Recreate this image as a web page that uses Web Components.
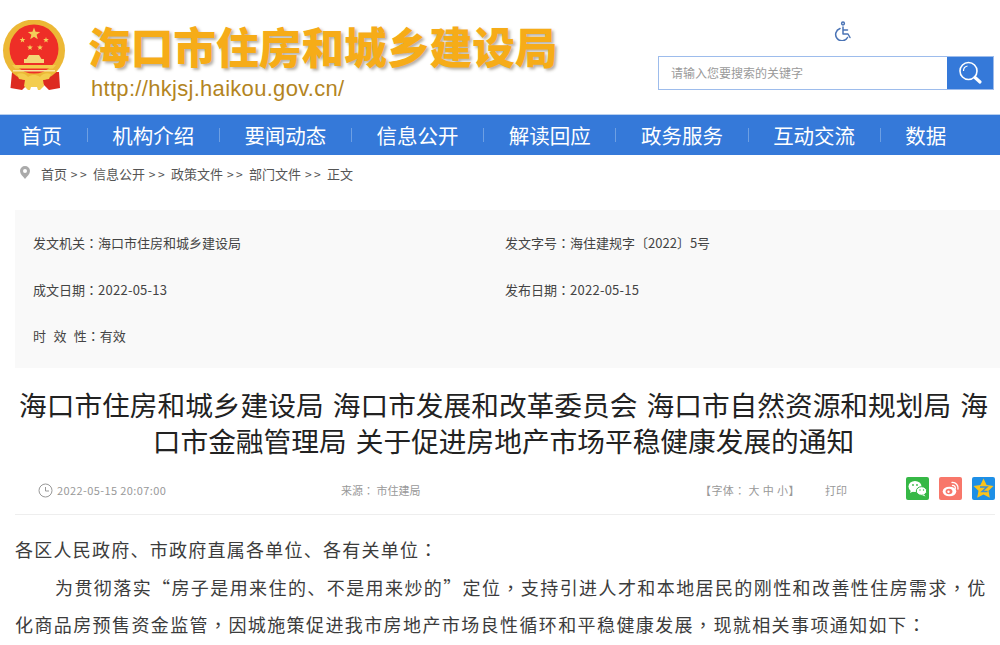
<!DOCTYPE html>
<html lang="zh-CN"><head><meta charset="utf-8"><title>海口市住房和城乡建设局</title>
<style>
html,body{margin:0;padding:0;background:#fff;overflow:hidden}
body{font-family:"Noto Sans CJK SC","Liberation Sans",sans-serif;width:1000px;height:645px}
</style></head><body>
<site-header></site-header>
<site-nav></site-nav>
<bread-crumb></bread-crumb>
<info-box></info-box>
<doc-title>海口市住房和城乡建设局 海口市发展和改革委员会 海口市自然资源和规划局 海口市金融管理局 关于促进房地产市场平稳健康发展的通知</doc-title>
<meta-bar></meta-bar>
<doc-body></doc-body>
<script>
function def(name, html){
  const out=html.replace(/[，：]/g,'<span class="pc" lang="zh-TW">$&</span>')+'<style>.pc{font-family:"Noto Sans CJK TC",sans-serif}</style>';
  customElements.define(name, class extends HTMLElement{
    constructor(){super();this.attachShadow({mode:'open'}).innerHTML=out;}
  });
}
const star=(cx,cy,r)=>{let p=[];for(let i=0;i<10;i++){const a=-Math.PI/2+i*Math.PI/5,R=i%2?r*.42:r;p.push((cx+R*Math.cos(a)).toFixed(1)+','+(cy+R*Math.sin(a)).toFixed(1));}return `<polygon points="${p.join(' ')}" fill="#f3cf5a"/>`;};
def('gov-emblem',`<style>:host{display:block;width:66px;height:72px}svg{display:block}</style>
<svg width="66" height="72" viewBox="0 0 66 72">
<path d="M10 52 L8.500 68 L20 70 L26 64 L41 64 L47 70 L58 68 L57 52Z" fill="#dd2a20"/>
<circle cx="32" cy="30.500" r="31" fill="#ecb836"/>
<circle cx="32" cy="29" r="24.500" fill="#ee2e27"/>
${star(32,14,6.500)}${star(20.500,20,3)}${star(44,20,3)}${star(28,27.500,3)}${star(38,27.500,3)}
<path d="M27 35h10l2.500 4h-15zM22 39h20v4H22z" fill="#f3d777"/>
<path d="M10 45h44l-3 3.500H13z" fill="#f4cb4d"/>
<path d="M11 50h42v1.500H11z" fill="#f9e3a0"/>
<path d="M15 54c4-2 9 0 11 3 2-1.500 4-2 6-2s4 .5 6 2c2-3 7-5 11-3l-2 5-6 1 1 6-4 4h-2l-1-3h-6l-1 3h-2l-4-4 1-6-6-1z" fill="#f3cd4e"/>
</svg>`);
def('site-header',`<style>
:host{display:flex;height:114px;box-sizing:border-box;padding:0 6px 0 2px;align-items:flex-start;background:#fff}
gov-emblem{margin:20px 20px 0 0}
.brand{display:flex;flex-direction:column;flex:none;width:480px}
.name{margin-top:15px;font:900 42.700px/60px "Noto Sans CJK SC",sans-serif;color:#f6ac18;text-shadow:2px 2px 3px rgba(90,80,60,.45);white-space:nowrap}
.url{font:22px/26px "Liberation Sans",sans-serif;color:#b3851f;margin:1px 0 0 3px;letter-spacing:.3px}
.right{margin-left:auto;width:336px;display:flex;flex-direction:column;align-items:stretch}
.acc{height:35px;margin-top:21px;display:flex;justify-content:center;box-sizing:border-box;padding-left:32px}
.search{display:flex;height:34px;box-sizing:border-box;border:1px solid #9dbcec}
.search span{flex:1;font-size:12px;line-height:32px;color:#9a9a9a;padding-left:12px}
.search b{width:46px;background:#3579d9;display:flex;align-items:center;justify-content:center}
</style>
<gov-emblem></gov-emblem>
<div class="brand"><div class="name">海口市住房和城乡建设局</div><div class="url">http://hkjsj.haikou.gov.cn/</div></div>
<div class="right"><div class="acc"><svg width="19" height="20" viewBox="0 0 19 20" fill="none" stroke="#4a73b5" stroke-width="1.500" stroke-linecap="round" stroke-linejoin="round"><circle cx="10" cy="2.500" r="1.400"/><path d="M10 6v7h5l2 3.500M10 9h4.500M7 7.500a6.300 6.300 0 1 0 7.500 9"/></svg></div>
<div class="search"><span>请输入您要搜索的关键字</span><b><svg width="26" height="26" viewBox="0 0 26 26" fill="none" stroke="#fff"><circle cx="11.500" cy="11" r="8.500" stroke-width="1.600"/><path d="M6.500 11a5 5 0 0 1 4-5" stroke-width="1.200"/><path d="M18 17.500l5 4.500" stroke-width="3.200" stroke-linecap="round"/></svg></b></div></div>`);
const navs=['首页','机构介绍','要闻动态','信息公开','解读回应','政务服务','互动交流','数据'];
def('site-nav',`<style>
:host{display:flex;height:41px;box-sizing:border-box;background:#3579d9;border-top:1px solid #b7cfef;padding-left:21px;align-items:center;overflow:hidden;color:#fff;font-size:20.500px;white-space:nowrap}
a{display:flex;align-items:center;height:100%;line-height:41px}
i{display:block;width:1px;height:14px;background:#6d9fe3;margin:0 24.600px}
</style>${navs.map((n,i)=>(i?'<i></i>':'')+`<a>${n}</a>`).join('')}`);
const seg=['首页','信息公开','政策文件','部门文件','正文'];
def('bread-crumb',`<style>
:host{display:flex;height:55px;box-sizing:border-box;padding:10px 0 0 20px;align-items:flex-start;font-size:13px;line-height:18px;color:#555}
svg{margin:1px 11px 0 0;flex:none}
.s{display:inline-block;width:26px;text-align:center;font-size:12px;letter-spacing:2.500px}
</style><svg width="10" height="13" viewBox="0 0 10 13"><path fill-rule="evenodd" d="M5 0a5 5 0 0 1 5 5c0 3-3 5.500-5 8-2-2.500-5-5-5-8a5 5 0 0 1 5-5zm0 3a2 2 0 1 0 0 4 2 2 0 0 0 0-4z" fill="#aaa"/></svg><span>${seg.join('<span class="s">&gt;&gt;</span>')}</span>`);
def('info-box',`<style>
:host{display:block;margin-left:15px;height:158px;box-sizing:border-box;background:#f9f9f9;padding:9.500px 18px;font-size:13px;color:#444}
.g{display:grid;grid-template-columns:472px 1fr;grid-auto-rows:46.500px;align-items:center}
.n{letter-spacing:.25px}
.w{word-spacing:4.500px}
</style><div class="g"><div>发文机关：海口市住房和城乡建设局</div><div>发文字号：海住建规字〔2022〕5号</div><div>成文日期：<span class="n">2022-05-13</span></div><div>发布日期：<span class="n">2022-05-15</span></div><div><span class="w">时 效 性</span>：有效</div></div>`);
def('doc-title',`<style>
:host{display:block;padding:18px 8px 0 15px;height:89px;font-size:27.700px;line-height:36px;word-spacing:3px;text-align:center;color:#222}
</style><slot></slot>`);
def('meta-bar',`<style>
:host{display:flex;height:40px;margin:0 5px 0 15px;box-sizing:border-box;border-bottom:1px solid #eee;font-size:11px;color:#999;align-items:center;padding-bottom:9px}
.t{display:flex;align-items:center;margin-left:23px;width:303px;letter-spacing:.4px}
.t svg{margin-right:4px}
.s{width:359px}
.f{width:125px;letter-spacing:.4px}
.p{width:60px}
.icons{display:flex;gap:10px;margin-left:auto;margin-top:-4px}
svg{display:block}
</style>
<div class="t"><svg width="15" height="15" viewBox="0 0 15 15" fill="none" stroke="#999"><circle cx="7.500" cy="7.500" r="6.500"/><path d="M7.500 4v4h3.500"/></svg>2022-05-15 20:07:00</div>
<div class="s">来源： 市住建局</div><div class="f">【字体： 大 中 小】</div><div class="p">打印</div>
<div class="icons">
<svg width="23" height="23" viewBox="0 0 23 23"><rect width="23" height="23" rx="2" fill="#36b846"/><ellipse cx="9" cy="9.500" rx="6.500" ry="5.500" fill="#fff"/><path d="M5 13l-1 3 4-2z" fill="#fff"/><ellipse cx="15.500" cy="14" rx="5.200" ry="4.300" fill="#fff" stroke="#36b846"/><path d="M18 17.500l1.500 2-3.500-1.500z" fill="#fff"/><circle cx="7" cy="8" r=".9" fill="#36b846"/><circle cx="11" cy="8" r=".9" fill="#36b846"/><circle cx="14" cy="13" r=".7" fill="#36b846"/><circle cx="17.500" cy="13" r=".7" fill="#36b846"/></svg>
<svg width="23" height="23" viewBox="0 0 23 23"><rect width="23" height="23" rx="2" fill="#f8776a"/><ellipse cx="10.500" cy="14.500" rx="6.800" ry="4.800" fill="#fff"/><ellipse cx="10" cy="14.500" rx="3.400" ry="2.700" fill="#f8776a"/><circle cx="9.500" cy="14.800" r="1.200" fill="#fff"/><path d="M13 5.500a5.500 5.500 0 0 1 6 6.500M13.500 8.500a2.500 2.500 0 0 1 2.800 3" fill="none" stroke="#fff" stroke-width="1.300" stroke-linecap="round"/></svg>
<svg width="23" height="23" viewBox="0 0 23 23"><rect width="23" height="23" rx="2" fill="#1e8fe6"/><polygon points="11.500,1.500 14.600,8 21.500,8.900 16.500,13.700 17.800,20.800 11.500,17.400 5.200,20.800 6.500,13.700 1.500,8.900 8.400,8" fill="#fbc31a"/><path d="M8 10h7l-5 4.500h5.500" fill="none" stroke="#3a8fd8" stroke-width="1.400"/></svg>
</div>`);
def('doc-body',`<style>
:host{display:block;padding:16px 0 0 15px;font-size:18px;line-height:37.500px;color:#3c3c3c;white-space:nowrap}
p{margin:0}
span.l{display:block}
.a{letter-spacing:1.250px}.b{letter-spacing:1.410px;padding-left:40px}.c{letter-spacing:1.400px}
</style><p class="a">各区人民政府、市政府直属各单位、各有关单位：</p>
<p><span class="l b">为贯彻落实“房子是用来住的、不是用来炒的”定位，支持引进人才和本地居民的刚性和改善性住房需求，优</span><span class="l c">化商品房预售资金监管，因城施策促进我市房地产市场良性循环和平稳健康发展，现就相关事项通知如下：</span></p>`);
</script>
</body></html>
